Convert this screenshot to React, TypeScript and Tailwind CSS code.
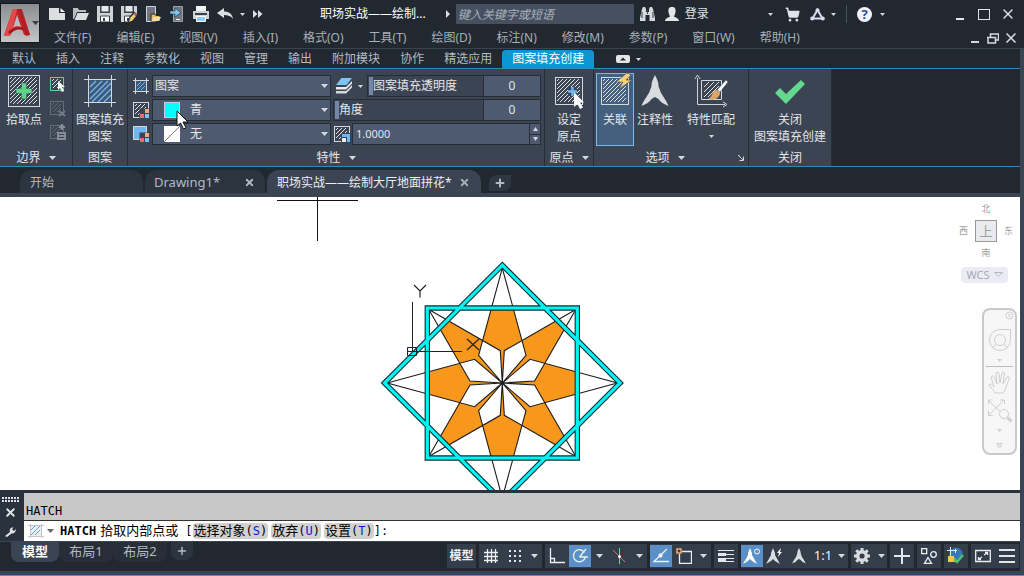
import type { ReactNode } from "react";
import { X, Plus, ShoppingCart } from "lucide-react";

const FONT = "font-['Noto_Sans','Noto_Sans_CJK_SC',sans-serif]";
const MONO = "font-['DejaVu_Sans_Mono','Noto_Sans_CJK_SC',monospace]";

const MENUS = [
  "文件(F)",
  "编辑(E)",
  "视图(V)",
  "插入(I)",
  "格式(O)",
  "工具(T)",
  "绘图(D)",
  "标注(N)",
  "修改(M)",
  "参数(P)",
  "窗口(W)",
  "帮助(H)",
];

const RIBBON_TABS = [
  "默认",
  "插入",
  "注释",
  "参数化",
  "视图",
  "管理",
  "输出",
  "附加模块",
  "协作",
  "精选应用",
  "图案填充创建",
];

type IconProps = { className?: string };

function Caret({ className = "text-[#d5d9de]" }: IconProps) {
  return (
    <svg width="7" height="4" viewBox="0 0 7 4" className={`shrink-0 ${className}`}>
      <path d="M0 0h7L3.5 4z" fill="currentColor" />
    </svg>
  );
}

function SmallCaret() {
  return (
    <svg width="5" height="3" viewBox="0 0 5 3" className="shrink-0 text-[#d5d9de]">
      <path d="M0 0h5L2.500 3z" fill="currentColor" />
    </svg>
  );
}

function CursorIcon({ className = "" }: IconProps) {
  return (
    <svg width="14" height="20" viewBox="0 0 14 20" className={className}>
      <path d="M1 1v15l3.500-3 3 6 2.500-1.200-3-5.800H12z" fill="#fff" stroke="#111" />
    </svg>
  );
}

/* ---------- quick access icons ---------- */

function NewIcon() {
  return (
    <svg width="16" height="16" viewBox="0 0 16 16">
      <path d="M0 2h10v5h6v7H0z" fill="#dcdfe2" />
      <path d="M11.500 2L16 6h-4.500z" fill="#fff" />
    </svg>
  );
}

function OpenIcon() {
  return (
    <svg width="16" height="16" viewBox="0 0 16 16">
      <path d="M0 2h5l1 2h7v2H4L1 13H0z" fill="#b9bec4" />
      <path d="M4.500 7H16l-3 7H1.500z" fill="#dcdfe2" />
    </svg>
  );
}

function SaveIcon({ pencil = false }: { pencil?: boolean }) {
  return (
    <svg width="16" height="16" viewBox="0 0 16 16">
      <path d="M0 0h16v16H0z" fill="#cfd3d8" />
      <path d="M3 0h10v7H3z" fill="#3a424d" />
      <path d="M4.500 0h7v5.500h-7z" fill="#e6e8ea" />
      <path d="M3.500 10h9v6h-9z" fill="#fff" stroke="#3a424d" />
      <path d="M6 12h2v3H6z" fill="#3a424d" />
      {pencil && (
        <>
          <path d="M7 16L8.500 10.500 13 5.500l3 2.500v8z" fill="#212830" />
          <path d="M8 16L9 12 12.500 8l2.500 2-3.500 4.500z" fill="#f2c572" />
          <path d="M13.500 6.500l2.500 2-1 1.500-2.500-2z" fill="#e0604f" />
        </>
      )}
    </svg>
  );
}

function DeviceOpenIcon() {
  return (
    <svg width="16" height="16" viewBox="0 0 16 16">
      <path d="M1.500.5h9v15h-9z" fill="#717780" stroke="#cfd3d8" />
      <path d="M6 8h4l1 1.500h4V15H6z" fill="#e9bd67" stroke="#212830" />
      <path d="M8.500 11H16l-2 4H6.500z" fill="#f7dda3" />
    </svg>
  );
}

function DeviceSaveIcon() {
  return (
    <svg width="16" height="16" viewBox="0 0 16 16">
      <path d="M4.500.5h9v15h-9z" fill="#717780" stroke="#9ba1a9" />
      <path d="M1 5h5V2l6 4.500L6 11V8H1z" fill="#7cc6f4" stroke="#212830" strokeWidth=".6" />
      <path d="M7 13.500h4" stroke="#fff" />
    </svg>
  );
}

function PrintIcon() {
  return (
    <svg width="16" height="16" viewBox="0 0 16 16">
      <path d="M3 0h10v6H3z" fill="#f2f3f4" />
      <path d="M0 5h16v8H0z" fill="#cfd3d8" />
      <path d="M2 7h12v2H2z" fill="#3a424d" />
      <path d="M3.500 10.500h9v5h-9z" fill="#8fcdf7" stroke="#fff" />
    </svg>
  );
}

function UndoIcon() {
  return (
    <svg width="16" height="16" viewBox="0 0 16 16">
      <path d="M0 7l7-5v3.500c5 0 8 2 9 7.500-2-3-5-4-9-4V12z" fill="#dcdfe2" />
    </svg>
  );
}

function FastForward() {
  return (
    <svg width="10" height="8" viewBox="0 0 10 8">
      <path d="M0 0l4.500 4L0 8zM5 0l4.500 4L5 8z" fill="#dcdfe2" />
    </svg>
  );
}

function AppLogo() {
  return (
    <svg width="28" height="30" viewBox="0 0 28 30">
      <path d="M10 1h9l8 26h-6l-2-6H9l-3 6H1z" fill="#c9272c" />
      <path d="M10 1h4L8 27l-2 1H1z" fill="#e14a4b" />
      <path d="M14 7l4 12c-3-1-6-1-8 1z" fill="#b9bbbd" />
      <path d="M5 24c5-5 11-6 15-4l1 3c-5-3-10-1-14 3z" fill="#a3161d" />
      <path d="M18 1l9 26-4 1-9-27z" fill="#b51d24" />
    </svg>
  );
}

function BinocularsIcon() {
  return (
    <svg width="15" height="14" viewBox="0 0 15 14">
      <path d="M2 2l1-2h2l1 2v3h3V2l1-2h2l1 2 2 9v3H9.500V8h-4v6H0v-3z" fill="#d5d8dc" />
      <path d="M2 5v6M13 5v6M7.500 3v4" stroke="#3a424d" />
    </svg>
  );
}

function UserIcon() {
  return (
    <svg width="14" height="14" viewBox="0 0 14 14">
      <path d="M7 0c3 0 4 2 3.500 5S9 9 9 9.500s5 1.500 5 4.500H0c0-3 5-4 5-4.500S4 8 3.500 5 4 0 7 0z" fill="#e3e5e8" />
    </svg>
  );
}

function TriangleNetIcon() {
  return (
    <svg width="15" height="13" viewBox="0 0 15 13">
      <path d="M7.500 2L2.500 10.500h10z" fill="none" stroke="#d7dcee" strokeWidth="2" />
      <circle cx="7.500" cy="2.200" r="2" fill="#d7dcee" />
      <circle cx="2.200" cy="10.500" r="2" fill="#d7dcee" />
      <circle cx="12.800" cy="10.500" r="2" fill="#d7dcee" />
    </svg>
  );
}

function RestoreIcon() {
  return (
    <svg width="12" height="11" viewBox="0 0 12 11">
      <path d="M3.500 4V1h8v6H9M3 1h9" fill="none" stroke="#d5d9de" strokeWidth="1.500" />
      <path d="M1 4.500h7.500V10H1zM0 4.500h9" fill="none" stroke="#d5d9de" strokeWidth="1.500" />
    </svg>
  );
}

/* ---------- ribbon icons ---------- */

type HatchProps = {
  size: number;
  stroke?: string;
  frame?: string;
  fill?: string;
  children?: ReactNode;
};

function HatchIcon({
  size,
  stroke = "#e3e5e8",
  frame = "#d5d8dc",
  fill = "none",
  children,
}: HatchProps) {
  const s = size - 1;
  const lines: string[] = [];
  for (let k = 6; k < 2 * s - 2; k += 4) {
    const a = Math.max(2, k - s + 2);
    const b = Math.min(s - 2, k - 2);
    if (b > a) lines.push(`M${a} ${k - a}L${b} ${k - b}`);
  }
  return (
    <svg width={size} height={size} viewBox={`0 0 ${size} ${size}`} className="shrink-0 overflow-visible">
      <rect x=".5" y=".5" width={s} height={s} fill={fill} stroke={frame} />
      <path d={lines.join("")} stroke={stroke} />
      {children}
    </svg>
  );
}

function PickPointsIcon() {
  return (
    <HatchIcon size={32}>
      <path d="M13.500 8h5v5.500H24v5h-5.500V24h-5v-5.500H8v-5h5.500z" fill="#5fd38a" stroke="#3b4453" strokeWidth=".5" />
    </HatchIcon>
  );
}

function SelectBoundaryIcon() {
  return (
    <HatchIcon size={14} frame="#5fd38a">
      <path d="M8 4v9l2-2 2 4 2-1-2-4h3z" fill="#fff" />
    </HatchIcon>
  );
}

function RemoveBoundaryIcon() {
  return (
    <HatchIcon size={14} frame="#646d7a" stroke="#646d7a">
      <path d="M9 10l6 5M15 10l-6 5" stroke="#727b88" strokeWidth="2" />
    </HatchIcon>
  );
}

function RecreateBoundaryIcon() {
  return (
    <HatchIcon size={14} frame="#646d7a" stroke="#646d7a">
      <path d="M7 7h9v8H7z" fill="#858d98" />
      <path d="M9 9.500h5M9 12.500h5" stroke="#3b4453" />
      <path d="M12-1v6M9 2h6" stroke="#858d98" strokeWidth="2" />
    </HatchIcon>
  );
}

function PatternIcon() {
  return (
    <svg width="32" height="32" viewBox="0 0 32 32">
      <path d="M5 5h22v22H5z" fill="#3d5a7a" />
      <path
        d="M6 12l6-6M6 18L18 6M6 24L24 6M8 27L27 8M14 27l13-13M20 27l7-7"
        stroke="#79b9ee"
        strokeWidth="1.200"
      />
      <path d="M4.500 0v32M27.500 0v32M0 4.500h32M0 27.500h32" stroke="#d5d8dc" />
    </svg>
  );
}

function SmallPatternIcon() {
  return (
    <svg width="16" height="16" viewBox="0 0 16 16">
      <path d="M3 3h10v10H3z" fill="#3d5a7a" />
      <path d="M4 8l4-4M4 12l8-8M8 12l4-4" stroke="#79b9ee" />
      <path d="M2.500 0v16M13.500 0v16M0 2.500h16M0 13.500h16" stroke="#d5d8dc" />
    </svg>
  );
}

function ColorChips() {
  return (
    <>
      <path d="M6.500 6.500H16V16H6.500z" fill="#3b4453" />
      <path d="M12 7h4v4h-4z" fill="#f4a876" />
      <path d="M7 12h4v4H7z" fill="#ee6a6a" />
      <path d="M12 12h4v4h-4z" fill="#79c0f5" />
    </>
  );
}

function HatchColorIcon() {
  return (
    <HatchIcon size={16}>
      <ColorChips />
    </HatchIcon>
  );
}

function BackgroundColorIcon() {
  return (
    <svg width="16" height="16" viewBox="0 0 16 16">
      <path d="M.5.500h13v13H.5z" fill="#6db8f2" stroke="#d5d8dc" />
      <ColorChips />
    </svg>
  );
}

function LayersIcon() {
  return (
    <svg width="16" height="16" viewBox="0 0 16 16">
      <path d="M0 15.500h10l6-6V7l-6 6H0z" fill="#d5d8dc" />
      <path d="M0 11.500h10l6-6V3l-6 6H0z" fill="#e9ebed" />
      <path d="M5.500 0H16l-5.500 7H0z" fill="#7cc6f4" />
    </svg>
  );
}

function ScaleIcon() {
  return (
    <HatchIcon size={16}>
      <path d="M7 7h9v9H7z" fill="#3b4453" />
      <path d="M8 8h8v8h-3v-5H8z" fill="#6db8f2" />
      <path d="M8 12h4v4H8z" fill="#e9ebed" />
    </HatchIcon>
  );
}

function OriginIcon() {
  return (
    <HatchIcon size={28}>
      <path d="M13 10h9v9h-9z" fill="#3b4453" />
      <path d="M17.500 10v9M13 14.500h9" stroke="#6db8f2" strokeWidth="2.500" />
      <path d="M19 15v15l3.500-3 2.500 5 3-1.500-3-5H29z" fill="#fff" />
    </HatchIcon>
  );
}

function AssociativeIcon() {
  return (
    <HatchIcon size={28}>
      <path d="M26-4l-11 9h7l-4 7 13-9h-6l5-5z" fill="#ffd071" stroke="#45607c" strokeWidth=".7" />
    </HatchIcon>
  );
}

function AnnotativeIcon({ size = 32 }: { size?: number }) {
  return (
    <svg width={size} height={size} viewBox="0 0 32 32">
      <path
        d="M16 0c2 4 4 8 3.500 11.500L21 15c0 3 6 9 8.500 16C25 29 21 27 19.500 24L16 22l-3.500 2C11 27 7 29 2.500 31 5 24 11 18 11 15l1.500-3.500C12 8 14 4 16 0z"
        fill="#d9dcdf"
      />
    </svg>
  );
}

function MatchIcon() {
  return (
    <svg width="32" height="32" viewBox="0 0 32 32" className="overflow-visible">
      <path d="M2.500 3v26.500H30M0 4l2.500-4L5 4M28 27l4 2.500-4 2.500" fill="none" stroke="#cfd3d8" />
      <path d="M6.500 5.500h20v19h-20z" fill="none" stroke="#d5d8dc" />
      <path d="M9 12l5-5M9 17L19 7M9 22L24 7M13 22l11-11M18 22l6-6" stroke="#e3e5e8" />
      <path d="M31 5l-9 10 3 2 8-10z" fill="#fff" stroke="#3b4453" strokeWidth=".5" />
      <path d="M21 15c4 0 5 3 3 6s-6 5-11 3c4-1 4-8 8-9z" fill="#d9a56a" />
    </svg>
  );
}

function CheckIcon() {
  return (
    <svg width="32" height="32" viewBox="0 0 32 32">
      <path d="M1 18l5-5 6 6L27 5l4 4-19 20z" fill="#62d98c" />
    </svg>
  );
}

/* ---------- ribbon parts ---------- */

type PanelProps = {
  title: string;
  caret?: boolean;
  launcher?: boolean;
  className: string;
  children: ReactNode;
};

function Panel({ title, caret, launcher, className, children }: PanelProps) {
  return (
    <section className={`flex shrink-0 flex-col border-r border-[#262d37] bg-[#3b4453] ${className}`}>
      <div className="flex h-20 justify-center">{children}</div>
      <div
        className={`relative flex h-[18px] items-center justify-center gap-2 pt-0.5 leading-4 ${
          launcher ? "pr-3" : ""
        }`}
      >
        {title}
        {caret && <Caret />}
        {launcher && (
          <button aria-label="对话框" className="absolute right-1">
            <svg width="6" height="6" viewBox="0 0 6 6">
              <path d="M0 0l5 5M5.500 1.500v4h-4M0 0h2" fill="none" stroke="#d5d8dc" />
            </svg>
          </button>
        )}
      </div>
    </section>
  );
}

type BigButtonProps = {
  icon: ReactNode;
  lines: ReactNode[];
  active?: boolean;
  className?: string;
};

function BigButton({ icon, lines, active, className = "" }: BigButtonProps) {
  return (
    <button
      className={`mt-1 flex h-[73px] flex-col items-center border ${
        active ? "border-[#79b9ee] bg-[#45607c]" : "border-transparent"
      } ${className}`}
    >
      <span className="mt-px mb-1 flex h-8 items-center justify-center">{icon}</span>
      {lines.map((line, i) => (
        <span key={i} className="flex h-[17px] items-center whitespace-nowrap">
          {line}
        </span>
      ))}
    </button>
  );
}

type ComboProps = {
  id: string;
  label: string;
  icon: ReactNode;
  value: string;
  swatch?: ReactNode;
};

function Combo({ id, label, icon, value, swatch }: ComboProps) {
  return (
    <div className="flex h-[22px] items-center gap-[3px]">
      <label htmlFor={id} aria-label={label}>
        {icon}
      </label>
      <div className="relative flex h-full flex-1 items-center border border-[#262d37] bg-[#4e5a70]">
        {swatch && <span className="relative ml-[11px] h-4 w-4 shrink-0">{swatch}</span>}
        <select
          id={id}
          className={`h-full w-full appearance-none bg-transparent outline-none ${swatch ? "pl-2.5" : "pl-0.5"}`}
        >
          <option>{value}</option>
        </select>
        <span className="pointer-events-none absolute right-0.5">
          <Caret />
        </span>
      </div>
    </div>
  );
}

function SliderField({ id, label }: { id: string; label: string }) {
  return (
    <div className="flex h-[22px] flex-1 border border-[#262d37] bg-[#3b4453]">
      <div className="relative flex flex-1 items-center">
        <input
          id={id}
          type="range"
          defaultValue={0}
          className="h-full w-full appearance-none bg-transparent px-px [&::-webkit-slider-thumb]:h-[18px] [&::-webkit-slider-thumb]:w-1 [&::-webkit-slider-thumb]:appearance-none [&::-webkit-slider-thumb]:bg-[#7586a8]"
        />
        <label htmlFor={id} className="pointer-events-none absolute left-[5px]">
          {label}
        </label>
      </div>
      <input
        type="text"
        aria-label={label}
        defaultValue="0"
        className="w-[57px] border-l border-[#262d37] bg-[#4e5a70] text-center outline-none"
      />
    </div>
  );
}

function SpinArrow({ up = false }: { up?: boolean }) {
  return (
    <svg width="5" height="4" viewBox="0 0 5 4">
      <path d={up ? "M0 4h5L2.500 0z" : "M0 0h5L2.500 4z"} fill="#d5d9de" />
    </svg>
  );
}

function PropertiesBody() {
  return (
    <div className="flex flex-1 gap-0.5 pt-1.5 pr-[3px] pl-[5px]">
      <div className="flex w-[198px] flex-col gap-0.5">
        <Combo id="hatch-type" label="图案填充类型" icon={<SmallPatternIcon />} value="图案" />
        <Combo
          id="hatch-color"
          label="图案填充颜色"
          icon={<HatchColorIcon />}
          value="青"
          swatch={
            <>
              <span className="block h-4 w-4 border border-[#c9ced6] bg-[#00ffff]" />
              <CursorIcon className="absolute top-2 left-3 z-10" />
            </>
          }
        />
        <Combo
          id="hatch-background"
          label="背景色"
          icon={<BackgroundColorIcon />}
          value="无"
          swatch={
            <svg width="16" height="16" viewBox="0 0 16 16">
              <path d="M0 0h16v16H0z" fill="#fff" />
              <path d="M0 16L16 0" stroke="#777" />
            </svg>
          }
        />
      </div>
      <div className="flex flex-1 flex-col gap-0.5">
        <div className="flex items-center">
          <button aria-label="图层" className="flex w-[34px] items-center gap-1.5 pl-[3px]">
            <LayersIcon />
            <SmallCaret />
          </button>
          <SliderField id="transparency" label="图案填充透明度" />
        </div>
        <div className="flex">
          <SliderField id="angle" label="角度" />
        </div>
        <div className="flex h-[22px] items-center gap-0.5">
          <label htmlFor="hatch-scale" aria-label="比例" className="pl-px">
            <ScaleIcon />
          </label>
          <div className="flex h-full flex-1 border border-[#262d37] bg-[#4e5a70]">
            <input
              id="hatch-scale"
              type="text"
              defaultValue="1.0000"
              className="w-0 flex-1 bg-transparent pl-[3px] text-[11px] outline-none"
            />
            <div className="flex w-[11px] flex-col gap-px border-l border-[#262d37] bg-[#262d37]">
              <button aria-label="增大" className="flex flex-1 items-center justify-center bg-[#4e5a70]">
                <SpinArrow up />
              </button>
              <button aria-label="减小" className="flex flex-1 items-center justify-center bg-[#4e5a70]">
                <SpinArrow />
              </button>
            </div>
          </div>
        </div>
      </div>
    </div>
  );
}

function Ribbon() {
  return (
    <div className="flex h-[99px] border-y border-[#2c8ab5] bg-[#212830] text-[#e3e6ea]">
      <Panel title="边界" caret className="w-[73px]">
        <BigButton icon={<PickPointsIcon />} lines={["拾取点"]} className="w-10" />
        <div className="flex flex-col gap-2.5 pt-2 pr-1 pl-1.5">
          <button aria-label="选择边界对象">
            <SelectBoundaryIcon />
          </button>
          <button aria-label="删除边界对象" disabled>
            <RemoveBoundaryIcon />
          </button>
          <button aria-label="重新创建边界" disabled>
            <RecreateBoundaryIcon />
          </button>
        </div>
      </Panel>
      <Panel title="图案" className="w-[55px]">
        <BigButton icon={<PatternIcon />} lines={["图案填充", "图案"]} />
      </Panel>
      <Panel title="特性" caret className="w-[417px]">
        <PropertiesBody />
      </Panel>
      <Panel title="原点" caret className="w-[49px]">
        <BigButton icon={<OriginIcon />} lines={["设定", "原点"]} />
      </Panel>
      <Panel title="选项" caret launcher className="w-[155px]">
        <div className="flex flex-1 pl-0.5">
          <BigButton icon={<AssociativeIcon />} lines={["关联"]} active className="w-[38px]" />
          <BigButton icon={<AnnotativeIcon />} lines={["注释性"]} className="w-[42px]" />
          <BigButton
            icon={<MatchIcon />}
            lines={["特性匹配", <SmallCaret key="caret" />]}
            className="ml-1.5 w-[58px]"
          />
        </div>
      </Panel>
      <Panel title="关闭" className="w-[83px]">
        <BigButton icon={<CheckIcon />} lines={["关闭", "图案填充创建"]} />
      </Panel>
    </div>
  );
}

/* ---------- header ---------- */

function QuickAccess() {
  const items: [string, ReactNode][] = [
    ["新建", <NewIcon />],
    ["打开", <OpenIcon />],
    ["保存", <SaveIcon />],
    ["另存为", <SaveIcon pencil />],
    ["从移动设备打开", <DeviceOpenIcon />],
    ["保存到移动设备", <DeviceSaveIcon />],
    ["打印", <PrintIcon />],
    ["放弃", <UndoIcon />],
  ];
  return (
    <div className="flex items-center">
      {items.map(([name, icon]) => (
        <button key={name} aria-label={name} className="flex w-6 justify-center">
          {icon}
        </button>
      ))}
      <button aria-label="放弃列表" className="ml-[3px]">
        <SmallCaret />
      </button>
      <button aria-label="更多" className="ml-2">
        <FastForward />
      </button>
    </div>
  );
}

function Header() {
  return (
    <header className="flex">
      <button
        aria-label="应用程序"
        className="mt-[3px] flex h-10 w-10 shrink-0 items-center gap-px border border-[#14181d] bg-linear-to-b from-[#8b8d90] to-[#c3c5c7] pl-0.5"
      >
        <AppLogo />
        <Caret className="text-[#3a3f46]" />
      </button>
      <div className="flex flex-1 flex-col">
        <div className="flex h-7 items-center pl-[5px] text-[#dfe2e5]">
          <QuickAccess />
          <h1 className="ml-[57px] text-white">职场实战——绘制...</h1>
          <svg width="4" height="8" viewBox="0 0 4 8" className="mr-1.5 ml-5">
            <path d="M0 0l4 4-4 4z" fill="#dcdfe2" />
          </svg>
          <input
            type="search"
            aria-label="搜索"
            placeholder="键入关键字或短语"
            className="h-5 w-[178px] bg-[#465061] px-0.5 italic outline-none placeholder:text-[#aab0ba]"
          />
          <button aria-label="查找" className="ml-1.5">
            <BinocularsIcon />
          </button>
          <button className="ml-2.5 flex items-center gap-1.5">
            <UserIcon />
            登录
          </button>
          <div className="ml-auto flex items-center">
            <SmallCaret />
            <button aria-label="购物车" className="ml-3">
              <ShoppingCart size={15} strokeWidth={2.500} fill="#dfe3ee" />
            </button>
            <button aria-label="应用商店" className="ml-2.5 flex items-center gap-1.5">
              <TriangleNetIcon />
              <SmallCaret />
            </button>
            <span className="mx-2.5 h-[18px] w-px bg-[#4a525e]" />
            <button aria-label="帮助" className="flex items-center gap-2">
              <span className="flex h-[15px] w-[15px] items-center justify-center rounded-full bg-[#f1f3f8] text-[13px] leading-none font-bold text-[#2d4b94]">
                ?
              </span>
              <SmallCaret />
            </button>
            <div className="ml-[71px] flex items-center gap-2.5 pr-2">
              <button aria-label="最小化" className="mt-2.5 mr-1 h-0.5 w-2 bg-[#e3e5e8]" />
              <button aria-label="最大化" className="h-[11px] w-3 border border-[#e3e5e8]" />
              <button aria-label="关闭窗口">
                <X size={16} strokeWidth={2} />
              </button>
            </div>
          </div>
        </div>
        <div className="flex h-5 items-center justify-between pr-[5px] pl-3.5 text-[#a9afb7]">
          <nav className="flex gap-[25px]">
            {MENUS.map((m) => (
              <button key={m} className="whitespace-nowrap">
                {m}
              </button>
            ))}
          </nav>
          <div className="flex items-center gap-2 text-[#d5d9de]">
            <button aria-label="最小化图形" className="mt-2 h-0.5 w-2 bg-[#d5d9de]" />
            <button aria-label="还原图形">
              <RestoreIcon />
            </button>
            <button aria-label="关闭图形" className="-ml-1">
              <X size={16} strokeWidth={2.500} />
            </button>
          </div>
        </div>
      </div>
    </header>
  );
}

function RibbonTabs() {
  return (
    <nav className="flex h-5 items-end border-t border-[#3b4350] pl-0.5 text-[#b4bac2]">
      {RIBBON_TABS.map((t, i) => (
        <button
          key={t}
          className={`h-[18px] px-2.5 leading-[18px] whitespace-nowrap ${
            i === RIBBON_TABS.length - 1 ? "rounded-t-sm bg-[#0c96d4] text-white" : ""
          }`}
        >
          {t}
        </button>
      ))}
      <button aria-label="最小化功能区" className="ml-[22px] flex h-[18px] items-center gap-1.5">
        <svg width="14" height="8" viewBox="0 0 14 8">
          <rect width="14" height="8" rx="2" fill="#e3e5e8" />
          <path d="M4 5.500h6L7 2.500z" fill="#212830" />
        </svg>
        <SmallCaret />
      </button>
    </nav>
  );
}

/* ---------- drawing area ---------- */

function FileTabs() {
  return (
    <nav className="flex h-[30px] items-end border-b-4 border-[#3b4453] pl-5 text-[#b4bac2]">
      <button className="h-[23px] w-[123px] rounded-t-xl bg-[#2c3440] pt-0.5 pl-2.5 text-left">
        开始
      </button>
      <div className="ml-0.5 flex h-[23px] w-[120px] items-center justify-between rounded-t-xl bg-[#2c3440] pt-0.5 pr-2.5 pl-[9px]">
        <button className="text-[13px]">Drawing1*</button>
        <button aria-label="关闭 Drawing1">
          <X size={11} strokeWidth={4} />
        </button>
      </div>
      <div className="ml-0.5 flex h-[23px] w-[214px] items-center justify-between rounded-t-xl bg-[#3b4453] pt-0.5 pr-[11px] pl-2.5 text-[#eceef0]">
        <button className="whitespace-nowrap">职场实战——绘制大厅地面拼花*</button>
        <button aria-label="关闭图形" className="text-[#a9afb7]">
          <X size={11} strokeWidth={4} />
        </button>
      </div>
      <button
        aria-label="新建图形"
        className="mb-0.5 ml-2 flex h-4 w-[22px] items-center justify-center rounded-tl-lg rounded-br-lg bg-[#2f3743]"
      >
        <Plus size={12} strokeWidth={4} />
      </button>
    </nav>
  );
}

function Rosette() {
  const axis = [0, 90, 180, 270];
  // the corner kites are slightly shorter, so they end on the inner square
  const rotate = (x: number, y: number, deg: number) => {
    const r = (deg * Math.PI) / 180;
    return `${x * Math.cos(r) - y * Math.sin(r)} ${x * Math.sin(r) + y * Math.cos(r)}`;
  };
  const kite = (pts: [number, number][], deg: number) =>
    `M${pts.map(([x, y]) => rotate(x, y, deg)).join("L")}Z`;
  const petals = axis
    .map(
      (d) =>
        kite([[0, 0], [-23.700, -27.700], [0, -115], [23.700, -27.700]], d) +
        kite([[0, 0], [-2, -32.300], [-73.500, -73.500], [-32.300, -2]], d)
    )
    .join("");
  return (
    <g transform="translate(502.300 186)">
      <clipPath id="inner-square">
        <path d="M-75-75H75V75H-75z" />
      </clipPath>
      <clipPath id="inner-diamond">
        <path d="M0-118L118 0 0 118-118 0z" />
      </clipPath>
      <g clipPath="url(#inner-square)">
        <path d={petals} fill="#f7981d" fillRule="evenodd" clipPath="url(#inner-diamond)" />
      </g>
      <path d={petals} fill="none" stroke="#1c1c1c" strokeWidth="1.100" />
      <g fill="none">
        <path d="M-75-75H75V75H-75zM0-117.800L117.800 0 0 117.800-117.800 0z" stroke="#0c2f35" strokeWidth="5.400" />
        <path d="M-75-75H75V75H-75zM0-117.800L117.800 0 0 117.800-117.800 0z" stroke="#00f4f4" strokeWidth="3.200" />
      </g>
    </g>
  );
}

function NavigationBar() {
  return (
    <div className="absolute top-[111px] right-[3px] rounded-lg border-2 border-[#c9c9c9] bg-[#f6f6f6]">
      <svg width="31" height="143" viewBox="0 0 31 143" fill="none" stroke="#cfcfcf">
        <circle cx="25.500" cy="5.500" r="3.500" />
        <path d="M24 4l3 3M27 4l-3 3" />
        <path d="M16 19.500h10.500V30A10.500 10.500 0 1 1 16 19.500z" />
        <circle cx="16" cy="30" r="5.500" />
        <path d="M12 34l-3.500 4M20 34l3.500 4" />
        <path d="M13 49h5l-2.500 3z" fill="#cfcfcf" stroke="none" />
        <path d="M2 56.500h27" stroke="#bdbdbd" />
        <path d="M11 83c-2-4-5-6-6-8 1-2 3-1 5 2l-3-10c1-2 3-1 3 0l3 7-1-11c1-1 3-1 3 0l1 10 2-10c1-1 3-1 2.500 1L19 74l4-7c1-1 3 0 2.500 1L22 77c-1 3-2 5-3 6z" />
        <path d="M5 91l15 14M20 90L5 105M4.500 94v-4h4M16 90h4.500v4M4.500 101v4.500h4" />
        <circle cx="20" cy="104" r="4.500" fill="#f6f6f6" />
        <path d="M23.500 107.500l4 4" strokeWidth="3" />
        <path d="M13 119h5l-2.500 3z" fill="#cfcfcf" stroke="none" />
        <path d="M12.500 133.500h6M13 135h5l-2.500 3z" />
      </svg>
    </div>
  );
}

function DrawingArea() {
  return (
    <main className="relative min-h-[293px] flex-1 bg-white">
      <svg className="absolute inset-0 h-full w-full">
        <path d="M277 3.500h81M317.500 0v44" stroke="#111" />
        <Rosette />
        <g fill="none" stroke="#222">
          <path d="M412.500 105v50M408 154.500h54M407.500 150.500h9v8h-9z" />
          <path d="M414 88l6 6 6-6M420 94v6.500M467 142l12 11M479 142l-12 11" strokeWidth="1.200" />
        </g>
      </svg>
      <div className="absolute top-1 right-[7px] flex w-[54px] flex-col items-center text-[9px] leading-4 text-[#a0a0a0]">
        <span>北</span>
        <div className="my-[3px] flex w-full items-center justify-between">
          <span>西</span>
          <button className="h-[22px] w-[22px] border border-[#999] bg-[#e9ebef] text-[13px] leading-4">
            上
          </button>
          <span>东</span>
        </div>
        <span>南</span>
      </div>
      <button className="absolute top-[70px] right-3 flex h-4 w-[47px] items-center justify-center gap-1 rounded-sm bg-[#ebebf5] text-[11px] text-[#a9a9b0]">
        WCS
        <svg width="9" height="6" viewBox="0 0 9 6">
          <path d="M.5.500h8l-4 4z" fill="none" stroke="#b8b8c4" />
        </svg>
      </button>
      <NavigationBar />
    </main>
  );
}

/* ---------- command line ---------- */

function CommandOption({ name, hotkey }: { name: string; hotkey: string }) {
  return (
    <button className="mr-[3px] rounded-sm bg-[#d0d0d0] px-px leading-4 last-of-type:mr-0">
      <span className="text-[13px]">{name}</span>(<span className="text-[#1414d2]">{hotkey}</span>)
    </button>
  );
}

function CommandLine() {
  return (
    <section className="flex h-[51px] border-t-[3px] border-[#2a323d] bg-[#2a323d] text-black">
      <div className="flex w-6 shrink-0 flex-col items-center gap-2 pt-1 pr-1 text-[#dfe2e5]">
        <svg width="17" height="5" viewBox="0 0 17 5">
          <path d="M0 1h17M0 4h17" stroke="#dfe2e5" strokeWidth="2" strokeDasharray="2 1" />
        </svg>
        <button aria-label="关闭命令行" className="-mt-1">
          <X size={13} strokeWidth={3.500} />
        </button>
        <button aria-label="自定义">
          <svg width="11" height="10" viewBox="0 0 11 10">
            <path d="M0 9l5-4C4 2 6 0 8.500.5L7 2.500 9 4l2-2c0 3-2 5-4.500 4.500L2 10z" fill="#dfe2e5" />
          </svg>
        </button>
      </div>
      <div className={`flex flex-1 flex-col ${MONO}`}>
        <output className="flex h-7 items-end border-b border-[#333] bg-[#c8c8c8] px-0.5 leading-[18px]">
          HATCH
        </output>
        <div className="flex h-5 items-center bg-white pl-1 whitespace-pre">
          <button aria-label="最近使用的命令" className="mr-1.5 flex items-center gap-[3px]">
            <svg width="16" height="14" viewBox="0 0 16 14">
              <path d="M3 2h10v10H3z" fill="#e3f1fb" />
              <path d="M3 6l4-4M3 11l9-9M7 11l5-5" stroke="#5aa7dc" />
              <path d="M2.500 0v14M13.500 0v14M0 1.500h16M0 12.500h16" stroke="#c5c5c5" />
            </svg>
            <Caret className="text-[#666]" />
          </button>
          <label htmlFor="command" className="mr-1 font-bold">
            HATCH
          </label>
          <span className="text-[13px]">拾取内部点或</span>
          <span> [</span>
          <CommandOption name="选择对象" hotkey="S" />
          <CommandOption name="放弃" hotkey="U" />
          <CommandOption name="设置" hotkey="T" />
          <span>]:</span>
          <input id="command" type="text" className="flex-1 outline-none" />
        </div>
      </div>
    </section>
  );
}

/* ---------- status bar ---------- */

type StatusButtonProps = {
  label: string;
  active?: boolean;
  className?: string;
  children: ReactNode;
};

function StatusButton({ label, active, className, children }: StatusButtonProps) {
  return (
    <button
      aria-label={label}
      className={`flex h-[22px] items-center justify-center ${active ? "w-[22px] bg-[#5b8fc7]" : className ?? "w-6"}`}
    >
      {children}
    </button>
  );
}

function Group({ children }: { children: ReactNode }) {
  return <div className="flex h-6 items-center bg-[#343d4a]">{children}</div>;
}

function LineIcon({ d, children }: { d: string; children?: ReactNode }) {
  return (
    <svg
      width="16"
      height="16"
      viewBox="0 0 16 16"
      fill="none"
      stroke="#eceef0"
      strokeWidth="1.300"
      className="shrink-0"
    >
      <path d={d} />
      {children}
    </svg>
  );
}

function GearIcon() {
  return (
    <svg width="16" height="16" viewBox="0 0 16 16" fill="none" stroke="#d9dcdf" className="shrink-0">
      <circle cx="8" cy="8" r="4.300" strokeWidth="3.400" />
      <path
        d="M8 0v3M8 13v3M0 8h3M13 8h3M2.300 2.300l2.200 2.200M11.500 11.500l2.200 2.200M13.700 2.300l-2.200 2.200M4.500 11.500l-2.200 2.200"
        strokeWidth="3"
      />
    </svg>
  );
}

function StatusBar() {
  return (
    <div className="flex items-center gap-[3px] pr-px pb-0.5 text-[#eceef0]">
      <Group>
        <StatusButton label="模型" className="w-[29px] font-bold">
          模型
        </StatusButton>
      </Group>
      <Group>
        <StatusButton label="栅格">
          <LineIcon d="M4.500 1v14M8.500 1v14M12.500 1v14M1 4.500h14M1 8.500h14M1 12.500h14" />
        </StatusButton>
        <StatusButton label="捕捉">
          <svg width="16" height="16" viewBox="0 0 16 16">
            <path d="M2 3h14M2 8h14M2 13h14" stroke="#e3e6ea" strokeWidth="2" strokeDasharray="2 3" />
          </svg>
        </StatusButton>
        <StatusButton label="捕捉设置" className="w-[15px]">
          <Caret />
        </StatusButton>
      </Group>
      <Group>
        <StatusButton label="正交">
          <LineIcon d="M1.500 0v14.500H16M1.500 10.500h4v4" />
        </StatusButton>
        <StatusButton label="极轴" active>
          <LineIcon d="M12.500 4.500a6 6 0 1 0 .8 4.500M7.500 9L14 1M7.500 9H16" />
        </StatusButton>
        <StatusButton label="极轴设置" className="w-4">
          <Caret />
        </StatusButton>
        <StatusButton label="等轴测">
          <svg width="16" height="16" viewBox="0 0 16 16">
            <path d="M2 2l12 12" stroke="#e0706f" />
            <path d="M8.500 0v16" stroke="#62d98c" />
            <circle cx="8.500" cy="8.500" r="1.500" fill="#fff" />
          </svg>
        </StatusButton>
        <StatusButton label="等轴测设置" className="w-4">
          <Caret />
        </StatusButton>
      </Group>
      <Group>
        <StatusButton label="对象捕捉追踪" active>
          <LineIcon d="M16 13.500H1L14 1">
            <circle cx="7.500" cy="7.500" r="1.500" fill="#fff" />
          </LineIcon>
        </StatusButton>
        <StatusButton label="对象捕捉">
          <LineIcon d="M6 3.500h9.500v12h-12V6">
            <path d="M1 1h4v4H1z" stroke="#f4a876" strokeWidth="1.500" />
          </LineIcon>
        </StatusButton>
        <StatusButton label="捕捉选项" className="w-[15px]">
          <Caret />
        </StatusButton>
      </Group>
      <Group>
        <StatusButton label="线宽">
          <svg width="16" height="14" viewBox="0 0 16 14">
            <path d="M0 1h8v1H0zM8 1h8v1H8zM0 4h8v3H0zM8 5h8v1H8zM0 9h8v4H0zM8 9h8v1H8zM8 12h8v1H8z" fill="#e3e6ea" />
          </svg>
        </StatusButton>
      </Group>
      <Group>
        <StatusButton label="注释可见性" active>
          <svg width="18" height="16" viewBox="0 0 18 16">
            <path d="M7 0l2 5v2l5 9-5-3-2-2-2 2-5 3 5-9V5z" fill="#fff" />
            <circle cx="14" cy="3.500" r="2.500" fill="none" stroke="#fff" />
          </svg>
        </StatusButton>
        <StatusButton label="自动缩放">
          <svg width="18" height="16" viewBox="0 0 18 16">
            <path d="M7 0l2 5v2l5 9-5-3-2-2-2 2-5 3 5-9V5z" fill="#d9dcdf" />
            <path d="M15 0l-4 5h2l-1 4 4-5h-2z" fill="#fff" />
          </svg>
        </StatusButton>
        <StatusButton label="注释比例图标">
          <AnnotativeIcon size={16} />
        </StatusButton>
        <StatusButton label="1:1" className="w-[37px] gap-1.5 text-[13px]">
          1:1
          <Caret />
        </StatusButton>
      </Group>
      <Group>
        <StatusButton label="切换工作空间" className="w-9 gap-2">
          <GearIcon />
          <Caret />
        </StatusButton>
      </Group>
      <Group>
        <StatusButton label="注释监视器">
          <svg width="16" height="16" viewBox="0 0 16 16">
            <path d="M8 0v16M0 8h16" stroke="#e3e6ea" strokeWidth="2" />
          </svg>
        </StatusButton>
      </Group>
      <Group>
        <StatusButton label="隔离对象">
          <LineIcon d="M.7.700h5v5h-5zM7 9.500l3.500 5.800h-7z">
            <circle cx="12.500" cy="6.500" r="2.800" />
          </LineIcon>
        </StatusButton>
      </Group>
      <Group>
        <StatusButton label="图形性能">
          <svg width="18" height="18" viewBox="0 0 18 18">
            <circle cx="9" cy="7" r="6.500" fill="#3878b8" />
            <path d="M3.500 0v10M0 3.500h10M8.500 2v4" stroke="#dceaf7" />
            <path d="M1 9h6l1 6H1z" fill="#f2c54b" />
            <path d="M7 12l3 3 6-7" fill="none" stroke="#4ec46c" strokeWidth="2.500" />
          </svg>
        </StatusButton>
      </Group>
      <Group>
        <StatusButton label="全屏显示">
          <LineIcon d="M.7 2.500h14.600v11H.7zM9 7l3.500-2.500M10 4.500h2.500V7M7 9l-3.500 2.500M3.500 9v2.500H6" />
        </StatusButton>
        <StatusButton label="自定义">
          <svg width="16" height="14" viewBox="0 0 16 14">
            <path d="M0 1h16M0 7h16M0 13h16" stroke="#e3e6ea" strokeWidth="2" />
          </svg>
        </StatusButton>
      </Group>
    </div>
  );
}

function Footer() {
  return (
    <footer className="flex h-[30px] justify-between border-t border-[#3b4453]">
      <nav className="flex items-start pl-[11px] text-[13px] text-[#b4bac2]">
        <button className="h-5 w-12 rounded-b-lg bg-[#3b4453] font-bold text-white">模型</button>
        <button className="h-5 w-[54px] rounded-b-lg bg-[#272e38]">布局1</button>
        <button className="h-5 w-[54px] rounded-b-lg bg-[#272e38]">布局2</button>
        <button
          aria-label="新建布局"
          className="ml-1 flex h-[18px] w-[22px] items-center justify-center rounded-b-lg bg-[#2c3440]"
        >
          <Plus size={12} strokeWidth={3} />
        </button>
      </nav>
      <StatusBar />
    </footer>
  );
}

export default function App() {
  return (
    <div className={`flex min-h-screen flex-col bg-[#212830] text-xs ${FONT}`}>
      <Header />
      <div className="flex flex-1 flex-col border-r-4 border-[#3b4453]">
        <RibbonTabs />
        <Ribbon />
        <FileTabs />
        <DrawingArea />
        <CommandLine />
        <Footer />
      </div>
      <div className="h-[5px] border-b border-[#2f9bdc] bg-[#3b4453]" />
    </div>
  );
}
